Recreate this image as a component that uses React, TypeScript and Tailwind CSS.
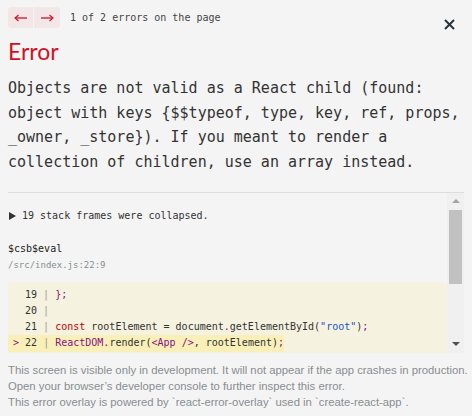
import React from "react";

const mono = "font-['DejaVu_Sans_Mono',monospace]";

function Arrow({ dir }: { dir: "left" | "right" }) {
  return (
    <svg width="14" height="8" viewBox="0 0 14 8" className="block">
      {dir === "left" ? (
        <>
          <line x1="1" y1="4" x2="13" y2="4" stroke="#ce1126" strokeWidth="1.3" />
          <polyline points="4.5,1 1,4 4.5,7" fill="none" stroke="#ce1126" strokeWidth="1.1" />
        </>
      ) : (
        <>
          <line x1="1" y1="4" x2="13" y2="4" stroke="#ce1126" strokeWidth="1.3" />
          <polyline points="9.5,1 13,4 9.5,7" fill="none" stroke="#ce1126" strokeWidth="1.1" />
        </>
      )}
    </svg>
  );
}

export default function App() {
  return (
    <div className="relative w-[472px] h-[416px] overflow-hidden bg-[#f4f4f4] px-2 pt-[7px] text-[#333]">
      {/* header */}
      <div className="flex items-center h-[21px]">
        <div className="flex gap-px">
          <button className="flex items-center justify-center w-[25px] h-[21px] rounded-l-[4px] bg-[#f3e6e7]">
            <Arrow dir="left" />
          </button>
          <button className="flex items-center justify-center w-[26px] h-[21px] rounded-r-[4px] bg-[#f3e6e7]">
            <Arrow dir="right" />
          </button>
        </div>
        <span className={`ml-[10px] text-[10px] ${mono} text-[#444]`}>1 of 2 errors on the page</span>
      </div>
      <button className="absolute right-[17px] top-[19px] w-[11px] h-[11px]">
        <svg width="11" height="11" viewBox="0 0 11 11" className="block">
          <line x1="1" y1="1" x2="10" y2="10" stroke="#293238" strokeWidth="2" />
          <line x1="10" y1="1" x2="1" y2="10" stroke="#293238" strokeWidth="2" />
        </svg>
      </button>

      {/* title */}
      <div className="mt-[9px] text-[23px] leading-[28px] text-[#ce1126] font-['Lato',sans-serif]">Error</div>

      {/* message */}
      <div className={`mt-[11px] text-[15px] leading-[24.7px] ${mono} text-[#333] whitespace-pre`}>
        {"Objects are not valid as a React child (found:\nobject with keys {$$typeof, type, key, ref, props,\n_owner, _store}). If you meant to render a\ncollection of children, use an array instead."}
      </div>

      <div className="mt-[17px] h-px bg-[#dcdcdc]" />

      {/* scroll area */}
      <div className="flex h-[160px]">
        <div className="flex-1 overflow-hidden">
          <div className={`pt-[15px] text-[10px] leading-[16px] ${mono} text-[#333] flex items-center`}>
            <span className="inline-block w-0 h-0 border-t-[4px] border-b-[4px] border-l-[7px] border-t-transparent border-b-transparent border-l-[#333] ml-px mr-[6px]" />
            <span>19 stack frames were collapsed.</span>
          </div>
          <div className={`mt-[17px] text-[10px] leading-[16px] ${mono} text-[#222]`}>$csb$eval</div>
          <div className={`text-[9px] leading-[16px] ${mono} text-[#878e91]`}>/src/index.js:22:9</div>
          <div className={`mt-[9px] rounded-[4px] bg-[#f6f2e0] pt-[5px] pb-2 text-[10px] leading-[16.2px] ${mono} whitespace-pre`}>
            <div className="pl-[5px]">
              <span className="text-[#333]">{"  19 "}</span>
              <span className="text-[#999]">|</span>
              <span className="text-[#881280]">{" };"}</span>
            </div>
            <div className="pl-[5px]">
              <span className="text-[#333]">{"  20 "}</span>
              <span className="text-[#999]">|</span>
            </div>
            <div className="pl-[5px]">
              <span className="text-[#333]">{"  21 "}</span>
              <span className="text-[#999]">|</span>
              <span> </span>
              <span className="text-[#c80000]">const</span>
              <span className="text-[#333]"> rootElement = document</span>
              <span className="text-[#881280]">.</span>
              <span className="text-[#333]">getElementById(</span>
              <span className="text-[#1155cc]">"root"</span>
              <span className="text-[#333]">)</span>
              <span className="text-[#881280]">;</span>
            </div>
            <div>
              <span className="inline-block pl-[5px] bg-[#f8f0b8]">
                <span className="text-[#881280]">{">"}</span>
                <span className="text-[#333]">{" 22 "}</span>
                <span className="text-[#999]">|</span>
                <span> </span>
                <span className="text-[#881280]">ReactDOM</span>
                <span className="text-[#881280]">.</span>
                <span className="text-[#333]">render(</span>
                <span className="text-[#881280]">{"<App />"}</span>
                <span className="text-[#333]">, rootElement)</span>
                <span className="text-[#881280]">;</span>
              </span>
            </div>
          </div>
        </div>
        {/* scrollbar */}
        <div className="w-[17px] bg-[#f0f0f0] flex flex-col items-center">
          <div className="h-[17px] flex items-center justify-center">
            <div className="w-0 h-0 border-l-[4px] border-r-[4px] border-b-[4px] border-l-transparent border-r-transparent border-b-[#a3a3a3]" />
          </div>
          <div className="w-[13px] h-[74px] bg-[#c1c1c1]" />
          <div className="flex-1" />
          <div className="h-[17px] flex items-center justify-center">
            <div className="w-0 h-0 border-l-[4px] border-r-[4px] border-t-[4px] border-l-transparent border-r-transparent border-t-[#505050]" />
          </div>
        </div>
      </div>

      {/* footer */}
      <div className="mt-[9px] text-[11.3px] leading-[16px] text-[#878e91] font-['Liberation_Sans',Arial,sans-serif] whitespace-nowrap">
        <div>This screen is visible only in development. It will not appear if the app crashes in production.</div>
        <div>Open your browser’s developer console to further inspect this error.</div>
        <div>This error overlay is powered by `react-error-overlay` used in `create-react-app`.</div>
      </div>
    </div>
  );
}
